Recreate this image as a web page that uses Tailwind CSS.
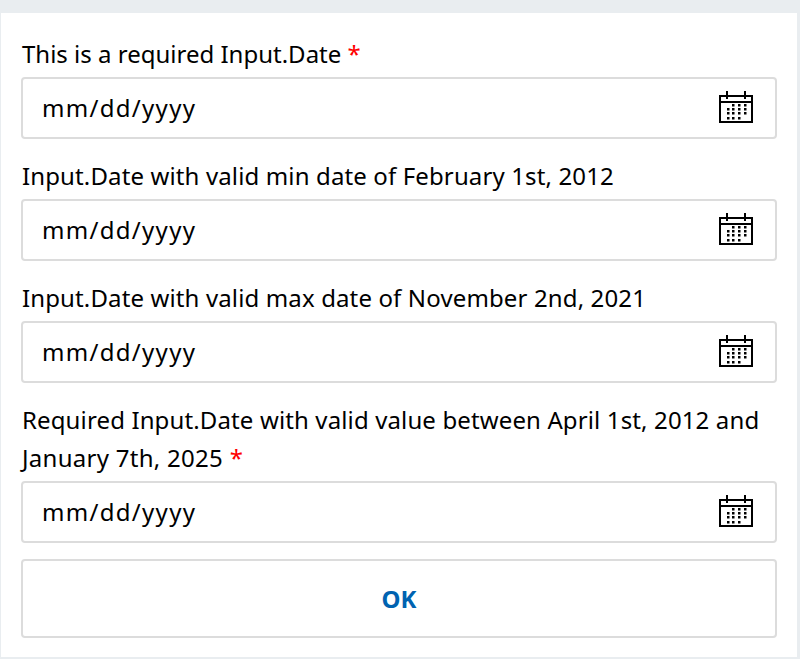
<!DOCTYPE html>
<html lang="en">
<head>
    <meta charset="UTF-8">
    <title>Input.Date</title>
    <script src="https://cdn.jsdelivr.net/npm/@tailwindcss/browser@4"></script>
</head>
<body class="w-[800px] h-[659px] overflow-hidden bg-[#e9edf0] font-['Noto_Sans',sans-serif] text-[24px] leading-[38px] text-black">
    <svg class="hidden">
        <symbol id="cal" viewBox="0 0 34 32">
            <path d="M1 5h32v26H1zM1 11h32M8 0v8M26 0v8" fill="none" stroke="#000" stroke-width="2"/>
            <path d="M13 13h2.500v2.500h-2.500zM19 13h2.500v2.500h-2.500zM25 13h2.500v2.500h-2.500zM8 17h2.500v2.500H8zM13 17h2.500v2.500h-2.500zM19 17h2.500v2.500h-2.500zM25 17h2.500v2.500h-2.500zM8 21h2.500v2.500H8zM13 21h2.500v2.500h-2.500zM19 21h2.500v2.500h-2.500zM25 21h2.500v2.500h-2.500zM8 26h2.500v2.500H8zM13 26h2.500v2.500h-2.500zM19 26h2.500v2.500h-2.500z"/>
        </symbol>
    </svg>
    <div class="mt-[13px] ml-[1px] w-[796px] h-[644px] bg-white pt-[22px] px-[20px]">
        <div class="h-[38px] pl-[1px] whitespace-nowrap">This is a required Input.Date <span class="text-[#f00]">*</span></div>
        <div class="mt-[4px] h-[62px] border-2 border-[#dcdcdc] rounded-[4px] pl-[19px] pr-[22px] flex items-center justify-between">
            <span class="tracking-[1.3px]">mm/dd/yyyy</span>
            <svg class="mb-[2px]" width="34" height="32"><use href="#cal"/></svg>
        </div>
        <div class="mt-[18px] h-[38px] pl-[1px] whitespace-nowrap tracking-[0.13px]">Input.Date with valid min date of February 1st, 2012</div>
        <div class="mt-[4px] h-[62px] border-2 border-[#dcdcdc] rounded-[4px] pl-[19px] pr-[22px] flex items-center justify-between">
            <span class="tracking-[1.3px]">mm/dd/yyyy</span>
            <svg class="mb-[2px]" width="34" height="32"><use href="#cal"/></svg>
        </div>
        <div class="mt-[18px] h-[38px] pl-[1px] whitespace-nowrap tracking-[0.13px]">Input.Date with valid max date of November 2nd, 2021</div>
        <div class="mt-[4px] h-[62px] border-2 border-[#dcdcdc] rounded-[4px] pl-[19px] pr-[22px] flex items-center justify-between">
            <span class="tracking-[1.3px]">mm/dd/yyyy</span>
            <svg class="mb-[2px]" width="34" height="32"><use href="#cal"/></svg>
        </div>
        <div class="mt-[18px] pl-[1px] whitespace-nowrap tracking-[0.13px]">Required Input.Date with valid value between April 1st, 2012 and<br><span class="tracking-[0.28px]">January 7th, 2025 <span class="text-[#f00]">*</span></span></div>
        <div class="mt-[4px] h-[62px] border-2 border-[#dcdcdc] rounded-[4px] pl-[19px] pr-[22px] flex items-center justify-between">
            <span class="tracking-[1.3px]">mm/dd/yyyy</span>
            <svg class="mb-[2px]" width="34" height="32"><use href="#cal"/></svg>
        </div>
        <button class="mt-[16px] w-full h-[79px] border-2 border-[#dcdcdc] rounded-[4px] bg-white text-[#0063b1] font-bold text-[24px]">OK</button>
    </div>
</body>
</html>
